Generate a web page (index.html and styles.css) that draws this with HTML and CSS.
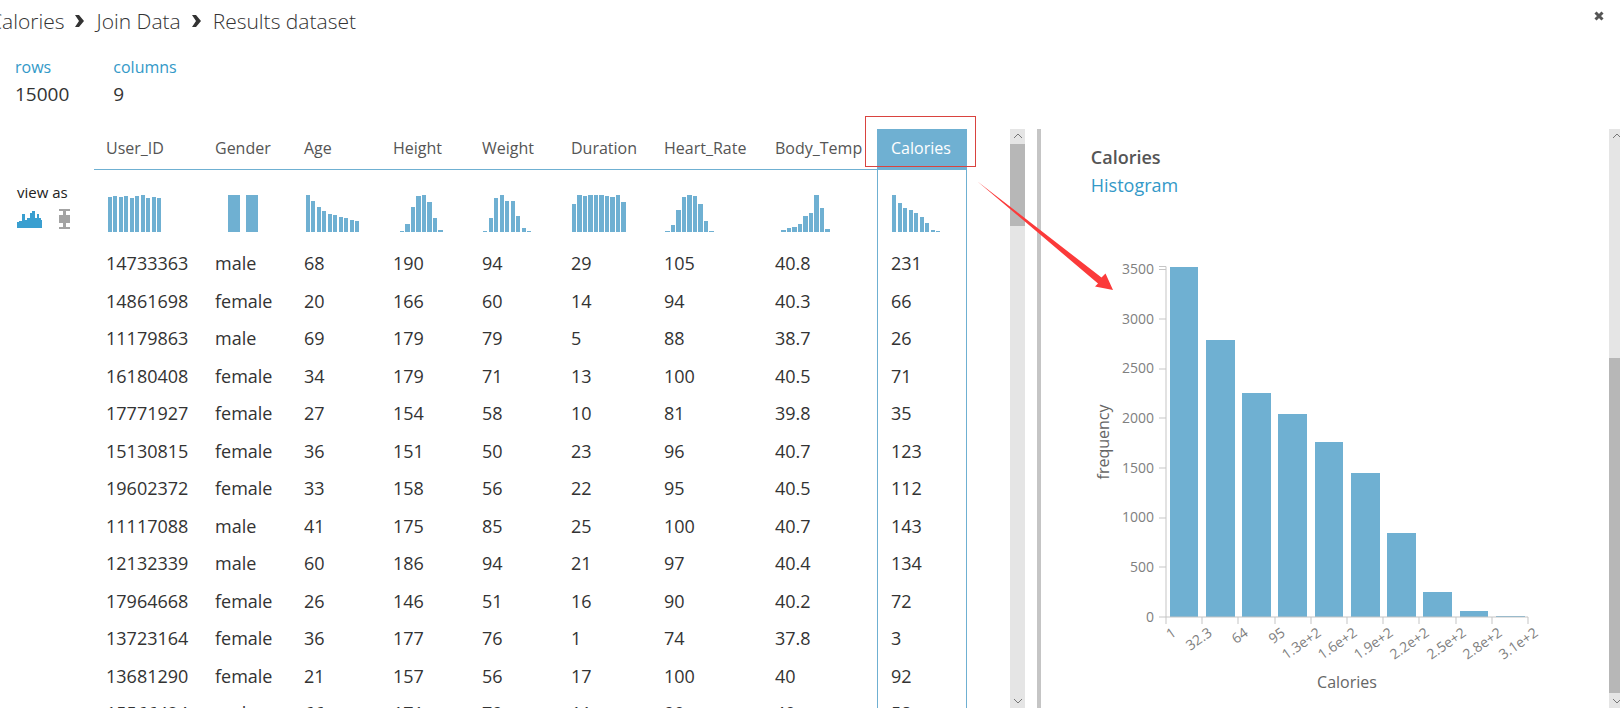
FILE: index.html
```html
<!DOCTYPE html>
<html lang="en">
<head>
  <meta charset="UTF-8">
  <meta name="viewport" content="width=device-width, initial-scale=1.0">
  <title>Results dataset</title>
  <link rel="stylesheet" href="styles.css">
</head>
<body>

  <header class="topbar">
    <nav class="breadcrumb">
      <span>Calories</span>
      <svg class="chevron" viewBox="0 0 10 14"><path d="M0 1h4l5 6-5 6H0l4-6z"/></svg>
      <span>Join Data</span>
      <svg class="chevron" viewBox="0 0 10 14"><path d="M0 1h4l5 6-5 6H0l4-6z"/></svg>
      <span>Results dataset</span>
    </nav>
    <button class="close" aria-label="Close">
      <svg viewBox="0 0 10 10"><path d="M1.5 1.5l7 7M8.500 1.500l-7 7"/></svg>
    </button>
  </header>

  <dl class="stats">
    <div class="stat">
      <dt>rows</dt>
      <dd>15000</dd>
    </div>
    <div class="stat">
      <dt>columns</dt>
      <dd>9</dd>
    </div>
  </dl>

  <main class="main">
    <section class="data-pane">
      <div class="view-as">
        <span>view as</span>
        <div class="view-buttons">
          <button aria-label="Histogram">
            <svg class="icon-hist" viewBox="0 0 26 20"><path d="M0 19v-6h2v-1h3V5h3v6h2V9h3V4h2V2h3v7h2V5h2v4h2v2h1v8z"/></svg>
          </button>
          <button aria-label="Box plot">
            <svg class="icon-box" viewBox="0 0 12 20"><path d="M0 0h11v2H7v4h4v8H7v4h4v2H0v-2h4v-4H0V6h4V2H0z"/></svg>
          </button>
        </div>
      </div>

      <div class="table-wrap">
        <table class="data">
          <colgroup>
            <col class="col-id"><col class="col-num"><col class="col-num"><col class="col-num"><col class="col-num">
            <col class="col-duration"><col class="col-heart"><col class="col-temp"><col class="col-calories">
          </colgroup>
          <thead>
            <tr>
              <th>User_ID</th>
              <th>Gender</th>
              <th>Age</th>
              <th>Height</th>
              <th>Weight</th>
              <th>Duration</th>
              <th>Heart_Rate</th>
              <th>Body_Temp</th>
              <th class="selected">Calories</th>
            </tr>
            <tr class="charts">
              <td><svg viewBox="0 0 56 37"><path d="M2 2h4v35h-4zM7 1h4v36h-4zM13 2h4v35h-4zM18 1h4v36h-4zM24 3h4v34h-4zM29 1h4v36h-4zM35 0h4v37h-4zM40 3h4v34h-4zM46 2h4v35h-4zM51 3h4v34h-4z"/></svg></td>
              <td><svg viewBox="0 0 56 37"><path d="M13 0h12v37h-12zM31 0h12v37h-12z"/></svg></td>
              <td><svg viewBox="0 0 56 37"><path d="M2 0h4v37h-4zM7 6h4v31h-4zM13 12h4v25h-4zM18 16h4v21h-4zM24 19h4v18h-4zM29 20h4v17h-4zM35 22h4v15h-4zM40 23h4v14h-4zM46 25h4v12h-4zM51 26h4v11h-4z"/></svg></td>
              <td><svg viewBox="0 0 56 37"><path d="M7 36h4v1h-4zM12 29h5v8h-5zM18 12h4v25h-4zM23 1h5v36h-5zM29 0h4v37h-4zM34 7h5v30h-5zM40 23h4v14h-4zM45 35h5v2h-5z"/></svg></td>
              <td><svg viewBox="0 0 56 37"><path d="M1 36h4v1h-4zM7 23h4v14h-4zM12 3h4v34h-4zM18 0h4v37h-4zM23 6h4v31h-4zM29 6h4v31h-4zM34 21h4v16h-4zM40 33h4v4h-4zM45 36h4v1h-4z"/></svg></td>
              <td><svg viewBox="0 0 56 37"><path d="M1 9h4v28h-4zM6 0h5v37h-5zM12 1h4v36h-4zM17 0h5v37h-5zM23 0h4v37h-4zM28 0h5v37h-5zM34 1h4v36h-4zM39 2h5v35h-5zM45 0h4v37h-4zM50 7h5v30h-5z"/></svg></td>
              <td><svg viewBox="0 0 56 37"><path d="M1 36h5v1h-5zM7 30h4v7h-4zM12 15h5v22h-5zM18 2h4v35h-4zM23 0h5v37h-5zM29 1h4v36h-4zM34 9h5v28h-5zM40 26h4v11h-4zM45 36h5v1h-5z"/></svg></td>
              <td><svg viewBox="0 0 56 37"><path d="M6 35h5v2h-5zM12 33h4v4h-4zM17 32h5v5h-5zM23 29h4v8h-4zM28 21h5v16h-5zM34 18h4v19h-4zM39 0h5v37h-5zM45 13h4v24h-4zM50 34h5v3h-5z"/></svg></td>
              <td class="selected"><svg viewBox="0 0 56 37"><path d="M1 0h4v37h-4zM7 8h4v29h-4zM12 13h4v24h-4zM18 15h4v22h-4zM23 18h4v19h-4zM29 22h4v15h-4zM34 28h4v9h-4zM40 35h4v2h-4zM45 36h4v1h-4z"/></svg></td>
            </tr>
          </thead>
          <tbody>
            <tr><td>14733363</td><td>male</td><td>68</td><td>190</td><td>94</td><td>29</td><td>105</td><td>40.8</td><td class="selected">231</td></tr>
            <tr><td>14861698</td><td>female</td><td>20</td><td>166</td><td>60</td><td>14</td><td>94</td><td>40.3</td><td class="selected">66</td></tr>
            <tr><td>11179863</td><td>male</td><td>69</td><td>179</td><td>79</td><td>5</td><td>88</td><td>38.7</td><td class="selected">26</td></tr>
            <tr><td>16180408</td><td>female</td><td>34</td><td>179</td><td>71</td><td>13</td><td>100</td><td>40.5</td><td class="selected">71</td></tr>
            <tr><td>17771927</td><td>female</td><td>27</td><td>154</td><td>58</td><td>10</td><td>81</td><td>39.8</td><td class="selected">35</td></tr>
            <tr><td>15130815</td><td>female</td><td>36</td><td>151</td><td>50</td><td>23</td><td>96</td><td>40.7</td><td class="selected">123</td></tr>
            <tr><td>19602372</td><td>female</td><td>33</td><td>158</td><td>56</td><td>22</td><td>95</td><td>40.5</td><td class="selected">112</td></tr>
            <tr><td>11117088</td><td>male</td><td>41</td><td>175</td><td>85</td><td>25</td><td>100</td><td>40.7</td><td class="selected">143</td></tr>
            <tr><td>12132339</td><td>male</td><td>60</td><td>186</td><td>94</td><td>21</td><td>97</td><td>40.4</td><td class="selected">134</td></tr>
            <tr><td>17964668</td><td>female</td><td>26</td><td>146</td><td>51</td><td>16</td><td>90</td><td>40.2</td><td class="selected">72</td></tr>
            <tr><td>13723164</td><td>female</td><td>36</td><td>177</td><td>76</td><td>1</td><td>74</td><td>37.8</td><td class="selected">3</td></tr>
            <tr><td>13681290</td><td>female</td><td>21</td><td>157</td><td>56</td><td>17</td><td>100</td><td>40</td><td class="selected">92</td></tr>
            <tr><td>15566424</td><td>male</td><td>66</td><td>171</td><td>79</td><td>11</td><td>90</td><td>40</td><td class="selected">58</td></tr>
          </tbody>
        </table>
      </div>

      <div class="scrollbar table-scroll">
        <svg class="arrow" viewBox="0 0 15 15"><path d="M4 9l4-4 4 4"/></svg>
        <div class="track"><div class="thumb"></div></div>
        <svg class="arrow" viewBox="0 0 15 15"><path d="M4 6l4 4 4-4"/></svg>
      </div>
    </section>

    <aside class="details">
      <h2>Calories</h2>
      <a href="#histogram">Histogram</a>

      <svg class="histogram" id="histogram" viewBox="0 0 470 450" role="img" aria-label="Histogram of Calories">
        <g class="bars">
          <rect x="79" y="10" width="28" height="350"/>
          <rect x="115" y="83" width="29" height="277"/>
          <rect x="151" y="136" width="29" height="224"/>
          <rect x="187" y="157" width="29" height="203"/>
          <rect x="224" y="185" width="28" height="175"/>
          <rect x="260" y="216" width="29" height="144"/>
          <rect x="296" y="276" width="29" height="84"/>
          <rect x="332" y="335" width="29" height="25"/>
          <rect x="369" y="354" width="28" height="6"/>
          <rect x="405" y="359" width="29" height="1"/>
        </g>
        <path class="axis" d="M68 9.500h7v350.500h-7M68 12.500h7M68 62h7M68 112h7M68 161h7M68 211h7M68 261h7M68 310h7"/>
        <path class="axis" d="M75 367v-7h362v7M111 360v7M147 360v7M184 360v7M220 360v7M256 360v7M292 360v7M328 360v7M365 360v7M401 360v7"/>
        <g class="y-labels">
          <text x="63" y="17">3500</text>
          <text x="63" y="67">3000</text>
          <text x="63" y="116">2500</text>
          <text x="63" y="166">2000</text>
          <text x="63" y="216">1500</text>
          <text x="63" y="265">1000</text>
          <text x="63" y="315">500</text>
          <text x="63" y="365">0</text>
        </g>
        <g class="x-labels">
          <text transform="translate(86 378) rotate(-35)">1</text>
          <text transform="translate(122 378) rotate(-35)">32.3</text>
          <text transform="translate(158 378) rotate(-35)">64</text>
          <text transform="translate(195 378) rotate(-35)">95</text>
          <text transform="translate(231 378) rotate(-35)">1.3e+2</text>
          <text transform="translate(267 378) rotate(-35)">1.6e+2</text>
          <text transform="translate(303 378) rotate(-35)">1.9e+2</text>
          <text transform="translate(339 378) rotate(-35)">2.2e+2</text>
          <text transform="translate(376 378) rotate(-35)">2.5e+2</text>
          <text transform="translate(412 378) rotate(-35)">2.8e+2</text>
          <text transform="translate(448 378) rotate(-35)">3.1e+2</text>
        </g>
        <text class="axis-title" x="256" y="431">Calories</text>
        <text class="axis-title" transform="translate(18 185) rotate(-90)">frequency</text>
      </svg>
    </aside>

    <div class="scrollbar page-scroll">
      <svg class="arrow" viewBox="0 0 15 15"><path d="M4 9l4-4 4 4"/></svg>
      <div class="track"><div class="thumb"></div></div>
      <svg class="arrow" viewBox="0 0 15 15"><path d="M4 6l4 4 4-4"/></svg>
    </div>

    <!-- red callout from the Calories column to its histogram -->
    <svg class="callout" viewBox="0 0 250 176">
      <rect x="0.5" y="0.5" width="110" height="50"/>
      <path d="M112.500 65.500L236.500 161.500l4-4 7.500 16.500-18-3.500 3-3z"/>
    </svg>
  </main>

</body>
</html>
```

FILE: styles.css
```css
* {
  box-sizing: border-box;
}
body {
  display: flex;
  flex-direction: column;
  height: 100vh;
  margin: 0;
  overflow: hidden;
  background-color: #fff;
  color: #333;
  font-family: "Open Sans", "Noto Sans", sans-serif;
  font-size: 18px;
}
button {
  padding: 0;
  border: none;
  background: none;
  cursor: pointer;
}
svg {
  display: block;
}

/* top bar */
.topbar {
  display: flex;
  justify-content: space-between;
  padding-right: 16px;
}
.breadcrumb {
  display: flex;
  align-items: center;
  gap: 11px;
  height: 42px;
  margin-left: -11px;
  font-size: 21px;
  font-weight: 300;
  white-space: nowrap;
}
.chevron {
  width: 10px;
  height: 14px;
  fill: #333;
}
.close {
  width: 10px;
  height: 32px;
}
.close svg {
  width: 10px;
  height: 10px;
  fill: none;
  stroke: #555;
  stroke-width: 3;
}

.stats {
  display: flex;
  gap: 44px;
  height: 87px;
  margin: 0;
  padding: 12px 15px;
}
.stat dt {
  color: #3399c8;
  font-size: 16px;
  line-height: 26px;
}
.stat dd {
  margin: 0;
  font-size: 19px;
  line-height: 28px;
}

/* table side */
.main {
  position: relative;
  display: flex;
  flex: 1;
  min-height: 0;
}
.data-pane {
  display: flex;
  flex: 0 0 64%;
  padding-right: 12px;
}
.view-as {
  width: 94px;
  padding: 52px 0 0 17px;
  color: #222;
  font-size: 15px;
  line-height: 22px;
  white-space: nowrap;
}
.view-buttons {
  display: flex;
  gap: 16px;
  padding-top: 6px;
}
.icon-hist {
  width: 26px;
  height: 20px;
  fill: #3a9fd0;
}
.icon-box {
  width: 12px;
  height: 20px;
  fill: #a3a3a3;
}
.table-wrap {
  flex: 1;
  min-width: 0;
  overflow: hidden;
}
.data {
  width: 873px;
  table-layout: fixed;
  border-spacing: 0;
  white-space: nowrap;
}
.col-id {
  width: 109px;
}
.col-num {
  width: 89px;
}
.col-duration {
  width: 93px;
}
.col-heart {
  width: 111px;
}
.col-temp {
  width: 114px;
}
.col-calories {
  width: 90px;
}
.data th {
  height: 41px;
  padding: 0 12px 2px;
  border-bottom: 1px solid #6fb0d2;
  color: #555;
  font-size: 16px;
  font-weight: 400;
  text-align: left;
}
.data td {
  height: 38px;
  padding: 0 12px 2px;
}
.data tbody tr:nth-child(even) td {
  height: 37px;
}
.data .charts td {
  height: 75px;
  padding-top: 14px;
}
.charts svg {
  width: 56px;
  height: 37px;
  fill: #6fb0d2;
}
.data .selected {
  padding-left: 13px;
  border-right: 1px solid #6fb0d2;
  border-left: 1px solid #6fb0d2;
}
.data th.selected {
  background-color: #6fb0d2;
  color: #fff;
}

/* scrollbars */
.scrollbar {
  display: flex;
  flex: none;
  flex-direction: column;
  width: 15px;
  background-color: #e5e5e5;
}
.arrow {
  flex: none;
  width: 15px;
  height: 15px;
  fill: none;
  stroke: #777;
}
.track {
  flex: 1;
}
.thumb {
  background-color: #b7b7b7;
}
.table-scroll .thumb {
  height: 15%;
}
.page-scroll {
  margin-right: -4px;
}
.page-scroll .track {
  display: flex;
  align-items: flex-end;
}
.page-scroll .thumb {
  width: 15px;
  height: 61%;
}

/* details side */
.details {
  flex: 1;
  min-width: 0;
  padding: 14px 0 0 50px;
  overflow: hidden;
  border-left: 4px solid #c5c5c5;
}
.details h2 {
  margin: 0;
  color: #555;
  font-size: 18px;
  font-weight: 600;
  line-height: 28px;
}
.details a {
  display: block;
  color: #3399c8;
  line-height: 28px;
  text-decoration: none;
}
.histogram {
  width: 470px;
  height: 450px;
  margin-top: 58px;
}
.bars {
  fill: #6fb0d2;
}
.axis {
  fill: none;
  stroke: #c5c5c5;
}
.y-labels,
.x-labels {
  fill: #808080;
  font-size: 14px;
  text-anchor: end;
}
.axis-title {
  fill: #666;
  font-size: 16px;
  text-anchor: middle;
}

.callout {
  position: absolute;
  top: -13px;
  left: 865px;
  width: 250px;
  height: 176px;
  pointer-events: none;
}
.callout rect {
  fill: none;
  stroke: #d9433f;
}
.callout path {
  fill: #fb3a3a;
}
```
